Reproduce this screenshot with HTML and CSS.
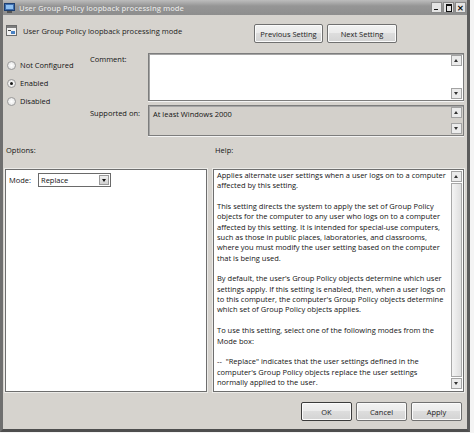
FILE: index.html
```html
<!DOCTYPE html>
<html lang="en">
<head>
    <meta charset="UTF-8">
    <title>User Group Policy loopback processing mode</title>
    <link rel="stylesheet" href="styles.css">
</head>
<body>

    <div class="window">
        <div class="titlebar">
            <svg class="app-icon" width="11" height="10" viewBox="0 0 11 10">
                <rect x="0.5" y="0.5" width="10" height="7" fill="#3f6fb0" stroke="#1d3f70"/>
                <rect x="2" y="2" width="7" height="4" fill="#8fc0f0"/>
                <rect x="3" y="8" width="5" height="2" fill="#555"/>
            </svg>
            <span class="title">User Group Policy loopback processing mode</span>
            <div class="caption-buttons">
                <span class="cap cap-min"></span>
                <span class="cap cap-max"></span>
                <span class="cap cap-close">&#x2715;</span>
            </div>
        </div>

        <div class="dialog">
            <div class="header">
                <div class="policy-name">
                    <svg class="policy-icon" width="11" height="11" viewBox="0 0 11 11">
                        <rect x="0.5" y="0.5" width="10" height="10" fill="#f2f2f2" stroke="#6b6b6b"/>
                        <rect x="1" y="1" width="9" height="2" fill="#7d7d7d"/>
                        <rect x="2" y="5" width="3" height="1" fill="#444"/>
                        <rect x="5" y="6" width="4" height="3" fill="#4a82c4"/>
                    </svg>
                    User Group Policy loopback processing mode
                </div>
                <div class="nav">
                    <button class="btn btn-prev">Previous Setting</button>
                    <button class="btn btn-next">Next Setting</button>
                </div>
            </div>

            <div class="top">
                <div class="states">
                    <div class="radio"><span class="radio-dot"></span>Not Configured</div>
                    <div class="radio"><span class="radio-dot checked"></span>Enabled</div>
                    <div class="radio"><span class="radio-dot"></span>Disabled</div>
                </div>
                <div class="fields">
                    <div class="field-label">Comment:</div>
                    <div class="box box-comment">
                        <div class="box-text"></div>
                        <div class="mini-scroll">
                            <span class="arrow arrow-up"></span>
                            <span class="arrow arrow-down"></span>
                        </div>
                    </div>
                    <div class="field-label label-supported">Supported on:</div>
                    <div class="box box-supported">
                        <div class="box-text">At least Windows 2000</div>
                        <div class="mini-scroll">
                            <span class="arrow arrow-up"></span>
                            <span class="arrow arrow-down"></span>
                        </div>
                    </div>
                </div>
            </div>

            <div class="captions">
                <div class="caption-options">Options:</div>
                <div class="caption-help">Help:</div>
            </div>

            <div class="panels">
                <div class="panel panel-options">
                    <div class="mode">
                        <span class="mode-label">Mode:</span>
                        <div class="select">
                            <span class="select-value">Replace</span>
                            <span class="select-drop"></span>
                        </div>
                    </div>
                </div>
                <div class="panel panel-help">
                    <div class="help-text">
                        <p>Applies alternate user settings when a user logs on to a computer affected by this setting.</p>
                        <p>This setting directs the system to apply the set of Group Policy objects for the computer to any user who logs on to a computer affected by this setting. It is intended for special-use computers, such as those in public places, laboratories, and classrooms, where you must modify the user setting based on the computer that is being used.</p>
                        <p>By default, the user's Group Policy objects determine which user settings apply. If this setting is enabled, then, when a user logs on to this computer, the computer's Group Policy objects determine which set of Group Policy objects applies.</p>
                        <p>To use this setting, select one of the following modes from the Mode box:</p>
                        <p>--&nbsp;&nbsp;"Replace" indicates that the user settings defined in the computer's Group Policy objects replace the user settings normally applied to the user.</p>
                    </div>
                    <div class="vscroll">
                        <span class="arrow arrow-up"></span>
                        <span class="thumb"></span>
                        <span class="arrow arrow-down"></span>
                    </div>
                </div>
            </div>

            <div class="footer">
                <button class="btn btn-ok">OK</button>
                <button class="btn">Cancel</button>
                <button class="btn">Apply</button>
            </div>
        </div>
    </div>

</body>
</html>
```

FILE: styles.css
```css
body {
    margin: 0;
    background: #f4f4f4;
    font-family: "Open Sans", "Noto Sans", sans-serif;
    font-size: 7.5px;
    color: #141414;
}

.window {
    width: 464px;
    height: 429px;
    border-left: 3px solid #6f6f6f;
    border-right: 3px solid #5c5c5c;
    border-bottom: 3px solid #4e4e4e;
    background: #d6d3ce;
    display: flex;
    flex-direction: column;
}

/* title bar */
.titlebar {
    height: 15px;
    display: flex;
    align-items: center;
    background: linear-gradient(#bdbdbd, #959595 40%, #8e8e8e);
    padding-left: 1px;
}

.app-icon {
    margin-right: 4px;
}

.title {
    color: #e6e6e6;
    font-weight: 600;
    font-size: 7.6px;
    text-shadow: 0 0 1px #777;
}

.caption-buttons {
    margin-left: auto;
    margin-right: 1px;
    display: flex;
    gap: 1px;
}

.cap {
    width: 9px;
    height: 9px;
    background: #e4e4e4;
    border: 1px solid #8a8a8a;
    position: relative;
    font-size: 8px;
    line-height: 9px;
    text-align: center;
    color: #111;
    font-weight: 700;
}

.cap-min::after {
    content: "";
    position: absolute;
    left: 2px;
    bottom: 2px;
    width: 4px;
    height: 1px;
    background: #111;
}

.cap-max::after {
    content: "";
    position: absolute;
    left: 2px;
    top: 1px;
    width: 4px;
    height: 5px;
    border: 1px solid #111;
    border-top-width: 2px;
}

/* dialog body */
.dialog {
    flex: 1;
    display: flex;
    flex-direction: column;
    padding: 0 3px 0 2px;
}

.header {
    height: 38px;
    display: flex;
    align-items: flex-start;
}

.policy-name {
    display: flex;
    align-items: center;
    margin-top: 10px;
    margin-left: 1px;
    font-size: 7.55px;
    color: #1c1c1c;
}

.policy-icon {
    margin-right: 6px;
}

.nav {
    margin-left: auto;
    margin-right: 67px;
    margin-top: 9px;
    display: flex;
    gap: 4px;
}

.btn {
    height: 19px;
    padding: 0;
    font-family: inherit;
    font-size: 7.5px;
    color: #1e1e1e;
    background: linear-gradient(#f2f2f2, #ebebeb 45%, #dddddd 50%, #d3d3d3);
    border: 1px solid #707070;
    border-radius: 2px;
    box-shadow: inset 0 0 0 1px #fbfbfb;
}

.btn-prev {
    width: 69px;
}

.btn-next {
    width: 70px;
}

/* state radios and fields */
.top {
    display: flex;
}

.states {
    width: 85px;
    padding-top: 3px;
}

.radio {
    height: 18px;
    display: flex;
    align-items: center;
    padding-left: 2px;
}

.radio-dot {
    width: 7px;
    height: 7px;
    border-radius: 50%;
    border: 1px solid #9a9a9a;
    background: radial-gradient(#ffffff, #dedede);
    margin-right: 4px;
    position: relative;
}

.radio-dot.checked::after {
    content: "";
    position: absolute;
    left: 2px;
    top: 2px;
    width: 3px;
    height: 3px;
    border-radius: 50%;
    background: #1a1a1a;
}

.fields {
    flex: 1;
    display: grid;
    grid-template-columns: 58px 1fr;
    grid-template-rows: 48px 31px;
    row-gap: 4px;
}

.field-label {
    padding-top: 1px;
}

.label-supported {
    padding-top: 3px;
}

.box {
    display: flex;
    border: 1px solid #7d7d7d;
    box-shadow: inset 1px 1px 0 #a5a5a5, 0 1px 0 #f4f4f4;
}

.box-comment {
    background: #fff;
}

.box-supported {
    background: #d3d0cb;
}

.box-text {
    flex: 1;
    padding: 3px 0 0 4px;
}

.mini-scroll {
    width: 11px;
    display: flex;
    flex-direction: column;
    justify-content: space-between;
    padding: 1px 1px 1px 0;
}

.arrow {
    width: 9px;
    height: 9px;
    background: #ebebeb;
    border: 1px solid #a3a3a3;
    position: relative;
    display: block;
}

.arrow::after {
    content: "";
    position: absolute;
    left: 2px;
    border-left: 2.5px solid transparent;
    border-right: 2.5px solid transparent;
}

.arrow-up::after {
    top: 3px;
    border-bottom: 3px solid #333;
}

.arrow-down::after {
    top: 3px;
    border-top: 3px solid #333;
}

/* options / help */
.captions {
    height: 33px;
    display: flex;
}

.caption-options {
    width: 209px;
    padding: 9px 0 0 1px;
}

.caption-help {
    padding-top: 9px;
}

.panels {
    height: 223px;
    display: flex;
    gap: 6px;
}

.panel {
    background: #fff;
    border: 1px solid #6e6e6e;
    box-shadow: 0 0 0 1px #ecebe8;
}

.panel-options {
    width: 200px;
}

.mode {
    display: flex;
    align-items: center;
    padding: 3px 0 0 3px;
}

.mode-label {
    width: 29px;
}

.select {
    width: 71px;
    height: 12px;
    border: 1px solid #6a6a6a;
    display: flex;
    align-items: center;
    background: #fff;
}

.select-value {
    flex: 1;
    padding-left: 2px;
}

.select-drop {
    width: 10px;
    height: 10px;
    margin-right: 1px;
    background: linear-gradient(#f0f0f0, #d0d0d0);
    border: 1px solid #9a9a9a;
    box-sizing: border-box;
    position: relative;
}

.select-drop::after {
    content: "";
    position: absolute;
    left: 1.5px;
    top: 3px;
    border-left: 2.5px solid transparent;
    border-right: 2.5px solid transparent;
    border-top: 3px solid #111;
}

.panel-help {
    flex: 1;
    display: flex;
}

.help-text {
    flex: 1;
    padding: 0 4px 0 3px;
    font-size: 7.5px;
    line-height: 10.35px;
    overflow: hidden;
}

.help-text p {
    margin: 0 0 10.35px;
}

.vscroll {
    width: 11px;
    display: flex;
    flex-direction: column;
    padding: 1px 1px 2px 0;
}

.thumb {
    flex: 1;
    margin: 1px 0;
    width: 9px;
    border: 1px solid #a8a8a8;
    background: linear-gradient(90deg, #f4f4f4, #dedede);
    box-sizing: content-box;
}

.footer {
    flex: 1;
    display: flex;
    justify-content: flex-end;
    align-items: flex-start;
    gap: 4px;
    padding: 10px 2px 0 0;
}

.footer .btn {
    width: 51px;
}

.btn-ok {
    border-color: #3b3b3b;
}
```
